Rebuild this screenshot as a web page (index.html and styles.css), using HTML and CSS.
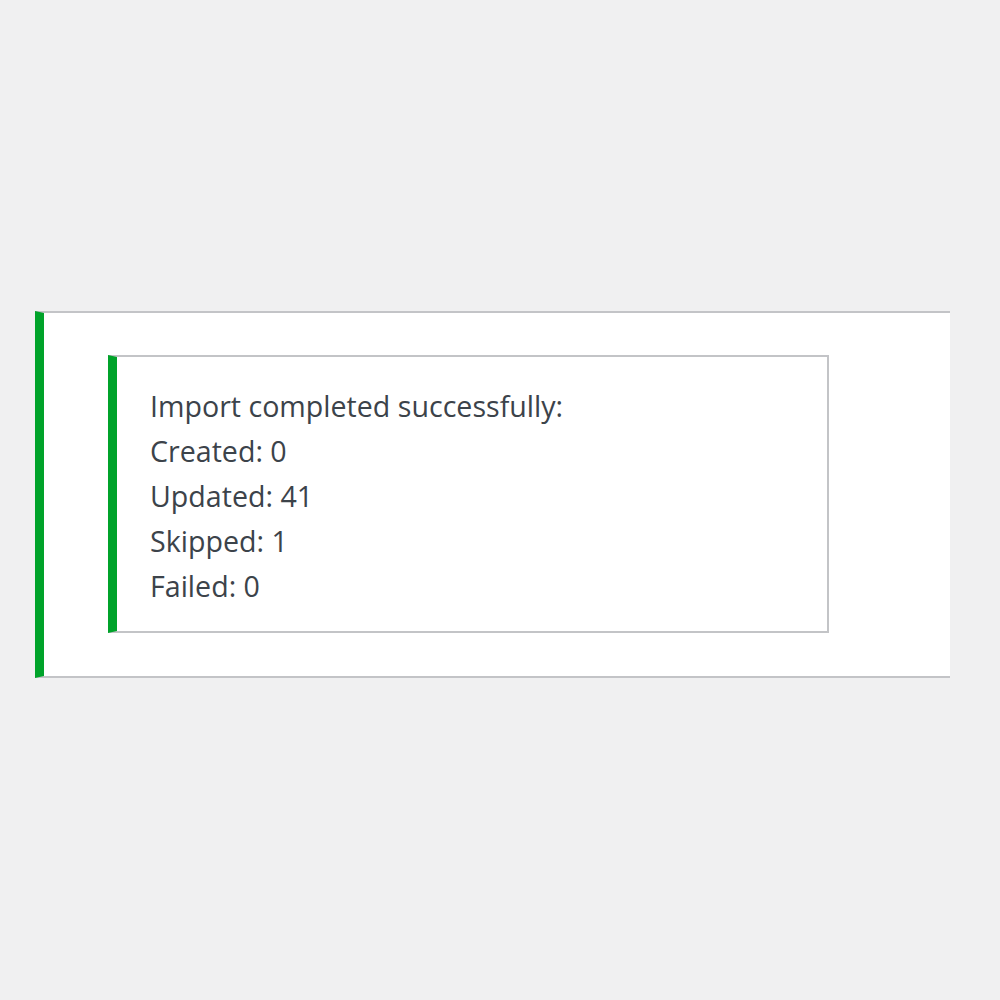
FILE: index.html
```html
<!DOCTYPE html>
<html lang="en">
<head>
    <meta charset="UTF-8">
    <title>Import</title>
    <link rel="stylesheet" href="styles.css">
</head>
<body>
    <div class="notice">
        <div class="notice-inner">
            <p>Import completed successfully:</p>
            <p>Created: 0</p>
            <p>Updated: 41</p>
            <p>Skipped: 1</p>
            <p>Failed: 0</p>
        </div>
    </div>
</body>
</html>
```
FILE: styles.css
```css
/* Page */
body {
    margin: 0;
    background-color: #f0f0f1;
    font-family: "Open Sans", "Noto Sans", sans-serif;
    color: #3c434a;
}

/* Outer notice */
.notice {
    box-sizing: border-box;
    width: 915px;
    margin: 311px 0 0 35px;
    padding: 42px 0 43px 64px;
    background-color: #fff;
    border-top: 2px solid #c3c4c7;
    border-bottom: 2px solid #c3c4c7;
    border-left: 9px solid #00a32a;
}

/* Inner message box */
.notice-inner {
    box-sizing: border-box;
    width: 721px;
    padding: 26px 20px 23px 33px;
    border: 2px solid #c3c4c7;
    border-left: 9px solid #00a32a;
}

.notice-inner p {
    margin: 0;
    font-size: 28.6px;
    line-height: 45px;
}
```
